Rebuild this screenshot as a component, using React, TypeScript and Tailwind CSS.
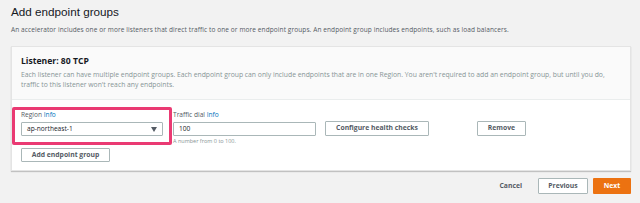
import React from "react";

const font = { fontFamily: '"Open Sans", "Liberation Sans", sans-serif' };

export default function App() {
  return (
    <div
      className="w-[640px] h-[203px] bg-[#f2f2f2] overflow-hidden text-[#16191f]"
      style={font}
    >
      <div className="pl-[11px] pr-[9px]">
        <div
          className="text-[11.7px] leading-[22px] pt-[1px] font-normal text-[#16191f]"
          style={{ fontFamily: '"Liberation Sans", Arial, sans-serif' }}
        >
          Add endpoint groups
        </div>
        <p className="mt-[2px] text-[6.5px] tracking-[0.1px] leading-[10px] text-[#545b64] whitespace-nowrap">
          An accelerator includes one or more listeners that direct traffic to one or more endpoint groups. An endpoint group includes endpoints, such as load balancers.
        </p>
        <div className="mt-[11px] bg-white border border-[#e4e4e4] shadow-[0_1px_1px_rgba(0,0,0,0.2)] h-[125px] flex flex-col">
          <div className="bg-[#fafafa] border-b border-[#eaeded] h-[53px] px-[9px] pt-[9px]">
            <div className="text-[8.6px] leading-[11px] font-bold text-[#16191f]">
              Listener: 80 TCP
            </div>
            <p className="mt-[3px] text-[6.8px] leading-[10px] text-[#879596] whitespace-nowrap">
              Each listener can have multiple endpoint groups. Each endpoint group can only include endpoints that are in one Region. You aren't required to add an endpoint group, but until you do,
              <br />
              traffic to this listener won't reach any endpoints.
            </p>
          </div>
          <div className="relative px-[9px] pt-[10px]">
            <div className="absolute left-0 top-[7px] w-[160px] h-[38px] border-[3px] border-[#ea3a73] rounded-[2px]" />
            <div className="flex items-start">
              <div className="w-[142px]">
                <div className="text-[6.6px] leading-[9px] text-[#545b64]">
                  Region <span className="text-[#0073bb]">Info</span>
                </div>
                <div className="mt-[3px] h-[14px] border border-[#aab7b8] rounded-[1px] bg-white flex items-center justify-between px-[5px]">
                  <span className="text-[6.6px] text-[#16191f]">ap-northeast-1</span>
                  <svg width="6" height="5" viewBox="0 0 6 5">
                    <path d="M0 0 L6 0 L3 5 Z" fill="#545b64" />
                  </svg>
                </div>
              </div>
              <div className="w-[143px] ml-[10px]">
                <div className="text-[6.6px] leading-[9px] text-[#545b64]">
                  Traffic dial <span className="text-[#0073bb]">Info</span>
                </div>
                <div className="mt-[3px] h-[14px] border border-[#aab7b8] rounded-[1px] bg-white flex items-center px-[5px]">
                  <span className="text-[6.6px] text-[#16191f]">100</span>
                </div>
                <div className="mt-[1px] text-[5.5px] leading-[8px] text-[#879596]">
                  A number from 0 to 100.
                </div>
              </div>
              <button className="ml-[9px] mt-[11px] w-[104px] h-[15px] border border-[#aab7b8] rounded-[1px] bg-white text-[6.8px] font-bold text-[#545b64] flex items-center justify-center">
                Configure health checks
              </button>
              <button className="ml-[48px] mt-[11px] w-[49px] h-[15px] border border-[#aab7b8] rounded-[1px] bg-white text-[6.8px] font-bold text-[#545b64] flex items-center justify-center">
                Remove
              </button>
            </div>
            <button className="mt-[3px] w-[89px] h-[14px] border border-[#aab7b8] rounded-[1px] bg-white text-[6.8px] font-bold text-[#545b64] flex items-center justify-center">
              Add endpoint group
            </button>
          </div>
        </div>
        <div className="mt-[7px] flex items-center justify-end">
          <span className="text-[6.8px] font-bold text-[#545b64] mr-[16px]">Cancel</span>
          <button className="w-[50px] h-[16px] border border-[#aab7b8] rounded-[1px] bg-white text-[6.8px] font-bold text-[#545b64] flex items-center justify-center">
            Previous
          </button>
          <button className="ml-[5px] w-[38px] h-[16px] rounded-[1px] bg-[#ec7211] text-[6.8px] font-bold text-white flex items-center justify-center">
            Next
          </button>
        </div>
      </div>
    </div>
  );
}
